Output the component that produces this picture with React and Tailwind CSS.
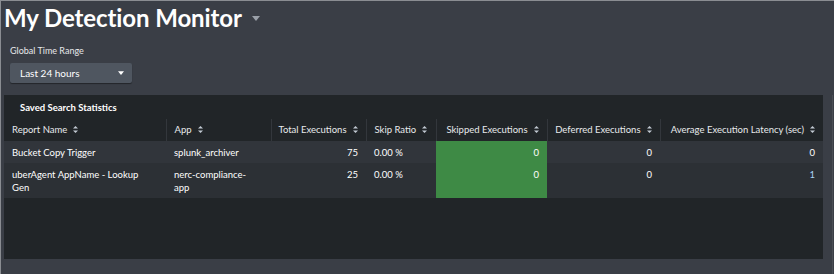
import { useState } from "react";

const rows = [
  {
    name: "Bucket Copy Trigger",
    app: "splunk_archiver",
    total: 75,
    ratio: "0.00 %",
    skipped: 0,
    deferred: 0,
    latency: 0,
  },
  {
    name: "uberAgent AppName - Lookup Gen",
    app: "nerc-compliance-app",
    total: 25,
    ratio: "0.00 %",
    skipped: 0,
    deferred: 0,
    latency: 1,
  },
];

function SortIcon() {
  return (
    <svg width="5" height="7" viewBox="0 0 5 7" className="inline-block ml-[6px] -mt-[1px] fill-[#c3cbd4]">
      <path d="M2.5 0 L5 2.5 H0 Z" />
      <path d="M2.5 7 L5 4.5 H0 Z" />
    </svg>
  );
}

function Caret({ className, w = 8, h = 5 }) {
  return (
    <svg width={w} height={h} viewBox="0 0 8 5" className={className}>
      <path d="M0 0 H8 L4 5 Z" />
    </svg>
  );
}

function App() {
  const [range] = useState("Last 24 hours");

  return (
    <div
      className="w-[834px] h-[274px] bg-[#3a3e46] text-white border-t border-l border-[#8a8d92] overflow-hidden"
      style={{ fontFamily: "Lato, 'Open Sans', sans-serif" }}
    >
      {/* TITLE */}
      <div className="flex items-center pl-[3px] pt-[1px] h-[32px]">
        <h1 className="text-[24px] font-bold leading-none tracking-[-0.1px]">My Detection Monitor</h1>
        <Caret className="ml-[10px] mt-[2px] fill-[#9aa0a8]" />
      </div>

      {/* TIME RANGE */}
      <div className="pl-[9px] pt-[13px]">
        <div className="text-[9px] text-[#e6e8ea] leading-none">Global Time Range</div>
        <button className="mt-[8px] w-[122px] h-[20px] bg-[#4f5660] rounded-[2px] flex items-center justify-between pl-[10px] pr-[8px] text-[10px] text-white shadow-[0_1px_1px_rgba(0,0,0,0.4)]">
          <span>{range}</span>
          <Caret className="fill-white" w={6} h={4} />
        </button>
      </div>

      {/* PANEL */}
      <div className="flex mt-[12px]">
        <div className="ml-[3px] w-[819px] h-[164px] bg-[#212528]">
          <div className="pl-[16px] pt-[6px] h-[24px] text-[9.5px] font-bold">Saved Search Statistics</div>
          <table className="w-full border-collapse text-[9.5px]">
            <thead>
              <tr className="h-[22px] text-[#e8eaec]">
                <th className="w-[162px] text-left font-normal pl-[8px] border-r border-[#33373c]">
                  Report Name<SortIcon />
                </th>
                <th className="w-[105px] text-left font-normal pl-[8px] border-r border-[#33373c]">
                  App<SortIcon />
                </th>
                <th className="w-[95px] text-right font-normal pr-[8px] border-r border-[#33373c]">
                  Total Executions<SortIcon />
                </th>
                <th className="w-[70px] text-left font-normal pl-[8px] border-r border-[#33373c]">
                  Skip Ratio<SortIcon />
                </th>
                <th className="w-[111px] text-right font-normal pr-[8px] border-r border-[#33373c]">
                  Skipped Executions<SortIcon />
                </th>
                <th className="w-[113px] text-right font-normal pr-[8px] border-r border-[#33373c]">
                  Deferred Executions<SortIcon />
                </th>
                <th className="text-right font-normal pr-[8px]">
                  Average Execution Latency (sec)<SortIcon />
                </th>
              </tr>
            </thead>
            <tbody>
              {rows.map((r, i) => (
                <tr key={r.name} className={i % 2 === 0 ? "bg-[#31353b] h-[22px]" : "bg-[#2c3035] h-[35px]"}>
                  <td className="pl-[8px] pr-[10px] align-top pt-[5px] leading-[13px]">{r.name}</td>
                  <td className="pl-[8px] pr-[10px] align-top pt-[5px] leading-[13px]">{r.app}</td>
                  <td className="pr-[8px] text-right align-top pt-[5px] leading-[13px]">{r.total}</td>
                  <td className="pl-[8px] align-top pt-[5px] leading-[13px]">{r.ratio}</td>
                  <td className="pr-[8px] text-right align-top pt-[5px] leading-[13px] bg-[#3e8a45]">{r.skipped}</td>
                  <td className="pr-[8px] text-right align-top pt-[5px] leading-[13px]">{r.deferred}</td>
                  <td className="pr-[8px] text-right align-top pt-[5px] leading-[13px]">
                    <span className={r.latency === 0 ? "text-white" : "text-[#a9d4f5]"}>{r.latency}</span>
                  </td>
                </tr>
              ))}
            </tbody>
          </table>
        </div>
        <div className="ml-[9px] w-[1px] h-[180px] bg-[#4a4e55]" />
      </div>
    </div>
  );
}

export default App;
